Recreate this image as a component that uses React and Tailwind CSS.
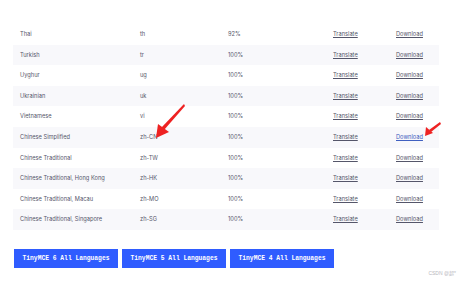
import React from "react";

const rows = [
  ["Thai", "th", "92%"],
  ["Turkish", "tr", "100%"],
  ["Uyghur", "ug", "100%"],
  ["Ukrainian", "uk", "100%"],
  ["Vietnamese", "vi", "100%"],
  ["Chinese Simplified", "zh-CN", "100%"],
  ["Chinese Traditional", "zh-TW", "100%"],
  ["Chinese Traditional, Hong Kong", "zh-HK", "100%"],
  ["Chinese Traditional, Macau", "zh-MO", "100%"],
  ["Chinese Traditional, Singapore", "zh-SG", "100%"],
];

export default function App() {
  return (
    <div className="relative w-[474px] h-[284px] bg-white overflow-hidden" style={{ fontFamily: "Inter, 'Liberation Sans', sans-serif" }}>
      <div className="pt-[24px] pl-[13px] w-[439px]">
        {rows.map((r, i) => (
          <div
            key={i}
            className={`flex items-center h-[20.6px] text-[5.7px] text-[#55566a] ${i % 2 === 1 ? "bg-[#f8f8fb]" : ""}`}
          >
            <div className="w-[127px] pl-[7px]">{r[0]}</div>
            <div className="w-[88px]">{r[1]}</div>
            <div className="w-[105px]">{r[2]}</div>
            <div className="w-[63px] underline">Translate</div>
            <div className={`underline ${i === 5 ? "text-[#4060c0]" : ""}`}>Download</div>
          </div>
        ))}
      </div>
      <div className="flex gap-[4px] pl-[14px] mt-[19px]" style={{ fontFamily: "'Liberation Mono', monospace" }}>
        {["TinyMCE 6 All Languages", "TinyMCE 5 All Languages", "TinyMCE 4 All Languages"].map((t) => (
          <div key={t} className="w-[104px] h-[19px] bg-[#2f5cff] text-white font-bold text-[6.3px] flex items-center justify-center">
            {t}
          </div>
        ))}
      </div>
      <div className="absolute right-[18px] top-[270px] text-[5px] text-[#b8b8c0]" style={{ fontFamily: "'Liberation Sans', 'Noto Sans CJK SC', sans-serif" }}>
        CSDN @超*
      </div>
      <svg className="absolute left-0 top-0" width="474" height="284">
        <polygon points="184,104 185,106 164,130 161,128" fill="#ee2222" />
        <polygon points="156,138 158,124 169,132" fill="#ee2222" />
        <polygon points="440,122 441,124 431,132 429,130" fill="#ee2222" />
        <polygon points="425,136 426,127 433,133" fill="#ee2222" />
      </svg>
    </div>
  );
}
